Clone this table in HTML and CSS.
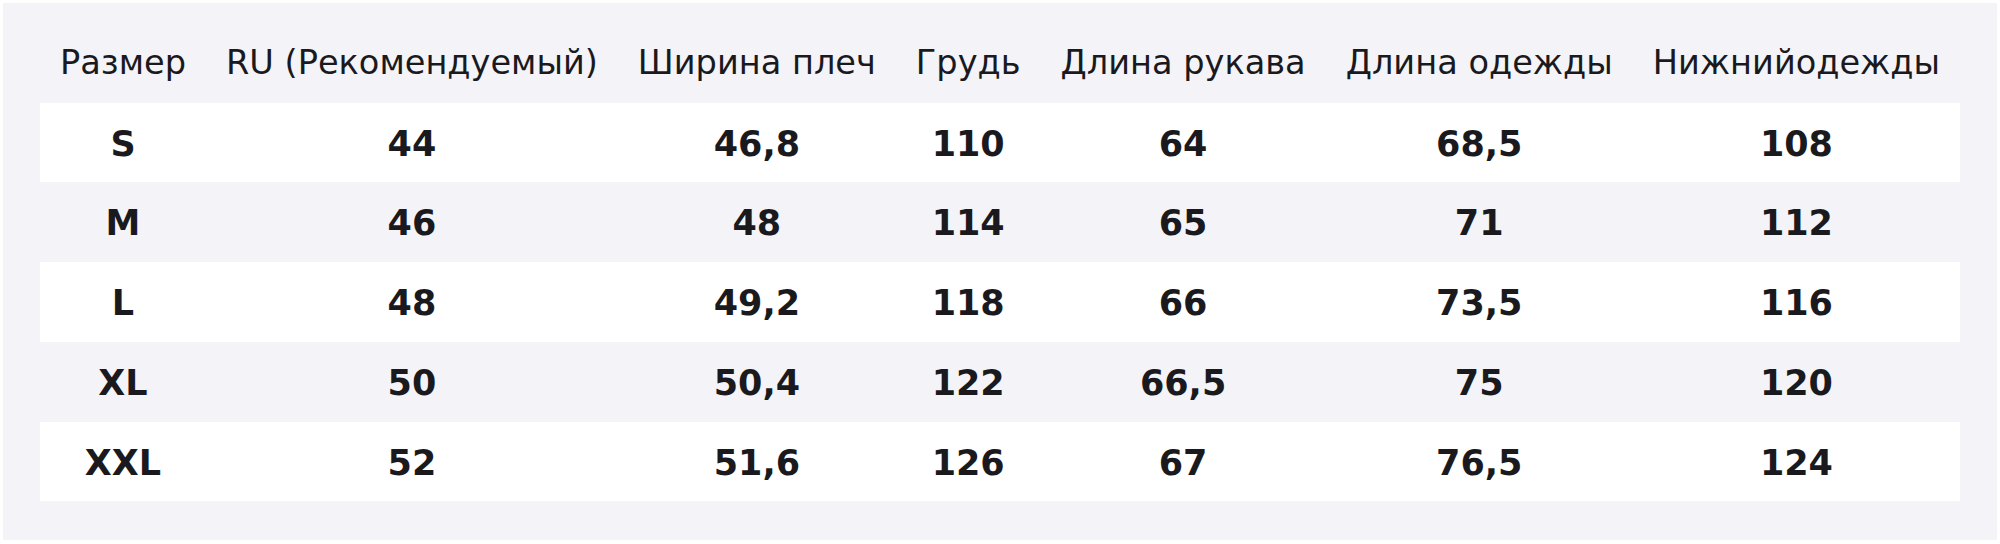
FILE: index.html
```html
<!DOCTYPE html>
<html lang="ru">
<head>
<meta charset="utf-8">
<title>Размеры</title>
<link rel="stylesheet" href="styles.css">
</head>
<body>
<div class="panel">
  <table class="sizes">
    <thead>
      <tr>
        <th>Размер</th>
        <th>RU (Рекомендуемый)</th>
        <th>Ширина плеч</th>
        <th>Грудь</th>
        <th>Длина рукава</th>
        <th>Длина одежды</th>
        <th>Нижнийодежды</th>
      </tr>
    </thead>
    <tbody>
      <tr class="odd"><td>S</td><td>44</td><td>46,8</td><td>110</td><td>64</td><td>68,5</td><td>108</td></tr>
      <tr class="even"><td>M</td><td>46</td><td>48</td><td>114</td><td>65</td><td>71</td><td>112</td></tr>
      <tr class="odd"><td>L</td><td>48</td><td>49,2</td><td>118</td><td>66</td><td>73,5</td><td>116</td></tr>
      <tr class="even"><td>XL</td><td>50</td><td>50,4</td><td>122</td><td>66,5</td><td>75</td><td>120</td></tr>
      <tr class="odd"><td>XXL</td><td>52</td><td>51,6</td><td>126</td><td>67</td><td>76,5</td><td>124</td></tr>
    </tbody>
  </table>
</div>
</body>
</html>
```
FILE: styles.css
```css
html, body {
  margin: 0;
  background: #ffffff;
}
body {
  padding: 3px;
  font-family: "DejaVu Sans", sans-serif;
  color: #1a1a1e;
}
.panel {
  background: #f4f4f8;
  padding: 20px 37px 39px;
}
.sizes {
  width: 100%;
  border-collapse: collapse;
  font-size: 33.6px;
  line-height: 39.7px;
}
.sizes th,
.sizes td {
  padding: 20px;
  text-align: center;
  white-space: nowrap;
}
.sizes th {
  font-weight: normal;
}
.sizes td {
  font-weight: bold;
  font-size: 35px;
  padding-top: 22px;
  padding-bottom: 18px;
}
.sizes .odd {
  background: #ffffff;
}
.sizes .even {
  background: transparent;
}
```
